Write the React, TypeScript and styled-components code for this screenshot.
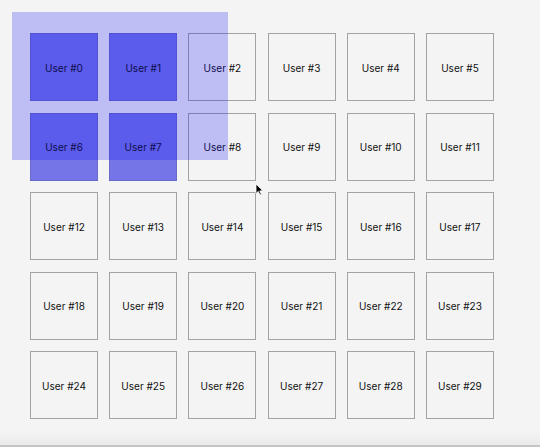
import React from "react";
import styled, { createGlobalStyle } from "styled-components";

const Global = createGlobalStyle`
  html, body { margin: 0; padding: 0; }
  body { font-family: Inter, "Noto Sans", sans-serif; background: #f4f4f4; }
`;

const Frame = styled.div`
  position: relative;
  box-sizing: border-box;
  width: 540px;
  height: 447px;
  padding: 33px 0 0 30px;
  background: linear-gradient(to bottom, #f4f4f4 0, #f4f4f4 432px, #eaeaea 445px);
  border-bottom: 2px solid #c4c4c4;
  overflow: hidden;
`;

const Grid = styled.div`
  display: grid;
  grid-template-columns: repeat(6, 68px);
  grid-auto-rows: 68px;
  column-gap: 11.2px;
  row-gap: 11.5px;
`;

const Cell = styled.div<{ $selected: boolean }>`
  box-sizing: border-box;
  display: flex;
  align-items: center;
  justify-content: center;
  padding-top: 1px;
  border: 1px solid ${(p) => (p.$selected ? "#6a6ac8" : "#a3a3a3")};
  background: ${(p) => (p.$selected ? "#7575e8" : "transparent")};
  color: #111;
  font-size: 10px;
  line-height: 1;
`;

const Selection = styled.div`
  position: absolute;
  left: 12px;
  top: 12px;
  width: 216px;
  height: 148px;
  background: rgba(0, 0, 252, 0.22);
  pointer-events: none;
`;

const Cursor = styled.svg`
  position: absolute;
  left: 255px;
  top: 183px;
  width: 9px;
  height: 13px;
`;

const selected = new Set([0, 1, 6, 7]);

export default function App() {
  return (
    <>
      <Global />
      <Frame>
        <Grid>
          {Array.from({ length: 30 }, (_, i) => (
            <Cell key={i} $selected={selected.has(i)}>
              User #{i}
            </Cell>
          ))}
        </Grid>
        <Selection />
        <Cursor viewBox="0 0 9 13">
          <path
            d="M1 1 L1 10.5 L3.3 8.4 L5 12 L6.4 11.3 L4.8 7.9 L7.8 7.7 Z"
            fill="#000"
            stroke="#fff"
            strokeWidth="0.8"
            strokeLinejoin="round"
          />
        </Cursor>
      </Frame>
    </>
  );
}
